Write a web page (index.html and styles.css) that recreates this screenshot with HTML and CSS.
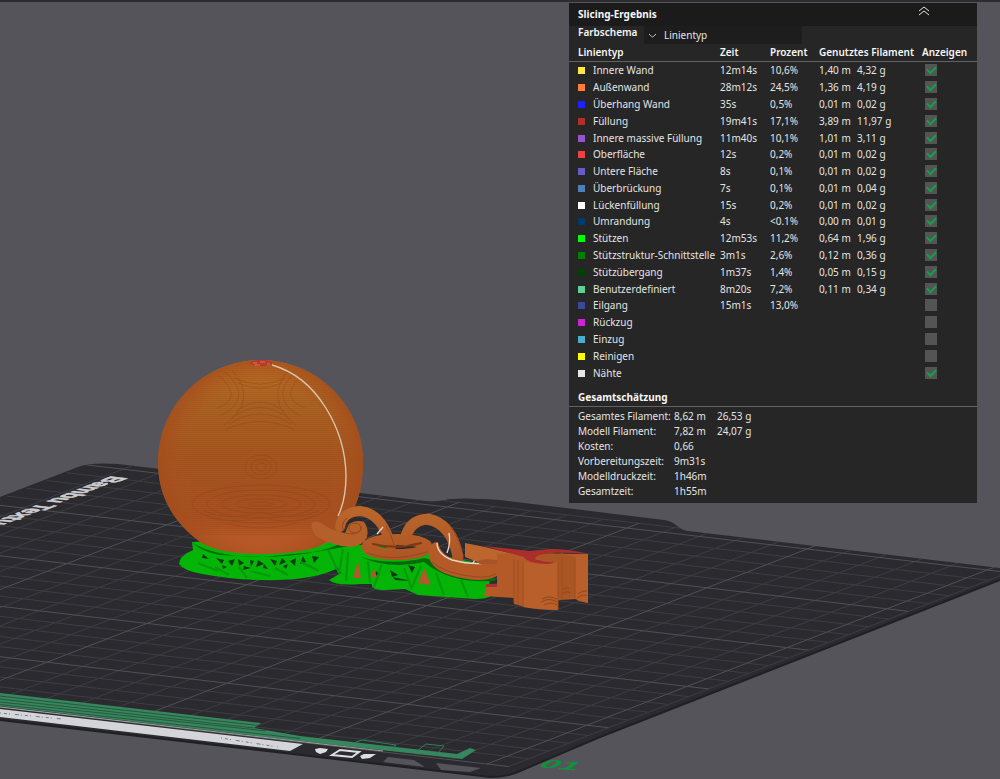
FILE: index.html
```html
<!DOCTYPE html>
<html lang="de">
<head>
<meta charset="utf-8">
<title>Slicing-Ergebnis</title>
<link rel="stylesheet" href="styles.css">
</head>
<body>
<main class="viewport">
<svg class="scene" viewBox="0 0 1000 779" preserveAspectRatio="xMinYMin slice" aria-label="3D-Vorschau">
  <defs>
    <linearGradient id="ball" x1="0" y1="0" x2="0" y2="1">
      <stop offset="0" stop-color="#bd7426"/><stop offset=".2" stop-color="#ac6423"/>
      <stop offset=".5" stop-color="#a55620"/><stop offset=".8" stop-color="#a85022"/><stop offset=".9" stop-color="#b65727"/><stop offset="1" stop-color="#bb5b2a"/>
    </linearGradient>
    <radialGradient id="rim" cx=".5" cy=".5" r=".5">
      <stop offset=".75" stop-color="#a9511d" stop-opacity="0"/><stop offset="1" stop-color="#a44c1b" stop-opacity=".8"/>
    </radialGradient>
    <linearGradient id="ring" x1="0" y1="505" x2="0" y2="560" gradientUnits="userSpaceOnUse">
      <stop offset="0" stop-color="#bb682b"/><stop offset="1" stop-color="#ad5425"/>
    </linearGradient>
    <clipPath id="plateClip"><path d="M0 497L78 467Q90 462 118 464L360 493L425 501Q438 502 445 500Q455 497 500 500L664 520Q671 521 676 525Q681 530 688 531L1000 568V580L600 737L520 771Q508 777 490 777L0 720Z"/></clipPath>
    <clipPath id="ballClip"><path d="M158 462A102.500 102 0 0 1 363 462C363 500 350 526 325 544Q305 553 262 554Q222 554 203 544C172 522 158 495 158 462Z"/></clipPath>
    <pattern id="layers" width="4" height="2" patternUnits="userSpaceOnUse"><path d="M0 .5H4" stroke="#873f12" stroke-width=".6" opacity=".3"/></pattern>
  </defs>
  <path class="plate" d="M0 497L78 467Q90 462 118 464L360 493L425 501Q438 502 445 500Q455 497 500 500L664 520Q671 521 676 525Q681 530 688 531L1000 568V580L600 737L520 771Q508 777 490 777L0 720Z"/>
  <path class="plate-edge" d="M1000 580L600 737L520 771Q508 777 490 777L0 720"/>
  <g clip-path="url(#plateClip)">
    <g transform="matrix(3.6 .42 2 -.776 -413 659)">
      <path class="grid" d="M0 10H256M0 20H256M0 30H256M0 40H256M0 60H256M0 70H256M0 80H256M0 90H256M0 110H256M0 120H256M0 130H256M0 140H256M0 160H256M0 170H256M0 180H256M0 190H256M0 210H256M0 220H256M0 230H256M0 240H256M10 0V256M20 0V256M30 0V256M40 0V256M60 0V256M70 0V256M80 0V256M90 0V256M110 0V256M120 0V256M130 0V256M140 0V256M160 0V256M170 0V256M180 0V256M190 0V256M210 0V256M220 0V256M230 0V256M240 0V256M256 0V256H0"/>
      <path class="grid grid-major" d="M0 0H256M0 50H256M0 100H256M0 150H256M0 200H256M0 250H256M50 0V256M100 0V256M150 0V256M200 0V256M250 0V256"/>
    </g>
    <text class="plate-text" transform="matrix(-.98 .38 -1.200 -.14 112 476)">Bambu Textu</text>
  </g>

  <g class="plate-print">
    <path fill="#36875d" d="M0 693L261 723L254 728L300 736L457 754L470 748L476 750L462 759L300 741L0 706Z"/>
    <path fill="none" stroke="#25402f" stroke-width=".7" d="M0 696L258 725.500M0 699L254 728M0 702L266 731M0 704.500L300 738.500"/>
    <path fill="none" stroke="#2f8058" d="M356 742L362 740L396 745L392 750M416 752L426 744L444 746L436 755"/>
    <path fill="none" stroke="#b8b9bd" stroke-width=".8" d="M0 707L300 741.500L383 751"/>
    <path fill="#d3d5d9" d="M0 709L303 744L290 751L0 717Z"/>
    <path fill="none" stroke="#777a80" stroke-width="1" stroke-dasharray="1 3 3 2 1 5 4 2" d="M0 713L62 719M221 738L278 747"/>
    <path fill="#dddee1" d="M315 749L320 748L328 749L326 752L320 754L316 752ZM360 756L364 754L376 754L370 758L362 759Z"/>
    <path fill="none" stroke="#dddee1" stroke-width="2" d="M332 755L340 750L359 752L352 757Z"/>
    <path fill="#55545b" d="M388 757L414 760L425 767L383 762ZM436 763L481 768L470 772L441 770Z"/>
  </g>
  <text class="plate-number" transform="matrix(3.400 .3 -1.500 1.100 537 767)">01</text>

  <g class="support">
    <path d="M192 542L193 550Q179 556 179 564Q184 571 202 574Q240 581 278 580Q315 579 336 569L350 558L355 535Z"/>
    <path d="M324 544L341 573L329 580Q336 586 360 584L372 584Q370 590 386 590L405 589L418 595L475 599Q487 599 491 596L487 565L430 553L365 545Z"/>
    <path class="support-dark" d="M193 543Q200 551 220 555L262 557L315 552L350 546L345 541Q320 556 262 557Q215 557 193 543ZM361 557Q390 566 425 558L431 560Q447 576 495 578V581Q450 584 424 562Q390 570 361 557Z"/>
    <path class="support-hole" d="M216 558l8 2-2 4zM228 561l7-2-3 7zM238 559l6 4-5 3zM250 560l4 1-3 6zM258 560l6 4-8 3zM270 559l7 2-2 5zM282 558l4 4-7 3zM290 561l6-3-1 8zM303 556l3 6-6 2zM312 556l7 1-5 6zM203 554l6 5-7-1zM222 565l5 2-4 2zM244 566l7 2-8 2zM264 564l4 5-5-1zM283 566l5-2-2 5zM390 570l8 5-6 2zM408 565l7 2-3 6zM393 577l18 4-16-1zM376 571l4 4-5 1z"/>
    <path class="support-line" d="M198 563l20 8M215 567l14 8M239 567l8 11M250 571l20 5M275 568l13 7M301 562l18 9M328 550l11 23 4-24M348 552l-2 29M368 561l2 22M382 563l-8 24M404 568l8 22M421 566l-10 23M436 573l8 22M461 580l7 17"/>
  </g>
  <path fill="#b0592c" d="M358 561L361 578H353ZM374 569L377 577H370ZM424 568L431 585L418 583Z"/>

  <g clip-path="url(#ballClip)">
    <rect x="158" y="360" width="206" height="196" fill="url(#ball)"/>
    <rect x="158" y="360" width="206" height="175" fill="url(#layers)"/>
    <circle cx="260.500" cy="462" r="103" fill="url(#rim)"/>
    <g class="moire">
      <path d="M218 375Q245 398 217 408M225 372Q255 398 220 416M232 370Q259 401 224 425M302 375Q278 398 305 408M295 372Q268 398 300 416M288 370Q264 401 296 425"/>
      <path d="M238 383Q260 393 282 383M234 378Q260 390 286 378M236 412Q260 392 284 412M232 418Q260 397 288 418M229 424Q260 404 291 424M225 430Q260 413 295 430"/>
      <ellipse cx="261" cy="467" rx="5" ry="4"/><ellipse cx="261" cy="467" rx="10" ry="8"/><ellipse cx="261" cy="467" rx="16" ry="12"/>
      <ellipse cx="261" cy="504" rx="12" ry="2"/><ellipse cx="261" cy="504" rx="25" ry="5"/><ellipse cx="261" cy="504" rx="40" ry="9"/><ellipse cx="261" cy="504" rx="54" ry="14"/><ellipse cx="261" cy="504" rx="69" ry="19"/>
      <path d="M203 511Q230 522 261 512Q292 522 319 511M210 518Q240 524 261 517Q285 525 312 518M225 523Q261 533 297 523"/>
    </g>
  </g>
  <ellipse cx="261" cy="363" rx="11" ry="3" fill="#b83a2c"/><path d="M253 363h4m3-1h5m2 2h3m-10 1h-5" stroke="#e0705f"/>
  <path d="M272 365C318 378 345 430 346 475Q346 500 338 516" fill="none" stroke="#d9c5ac" stroke-width="1.400"/>

  <g fill="none" stroke="url(#ring)" stroke-linecap="round" stroke-linejoin="round">
    <path stroke-width="10" d="M340 527Q342 512 360 511Q382 513 391 546"/>
    <path stroke="none" fill="#b4602a" d="M312 523Q316 519 324 525Q333 531 345 533L349 524Q356 519 364 522Q369 528 367 537Q363 546 350 547Q329 545 316 536Q310 528 312 523Z"/>
    <ellipse cx="355" cy="528" rx="6" ry="5" stroke="#94481d" stroke-width="1"/>
    <path stroke="#94481d" stroke-width="1" d="M345 533Q356 536 361 530M343 530Q341 522 347 518"/>
    <ellipse stroke-width="11" cx="397" cy="547" rx="30" ry="7.500"/>
    <path stroke="#7d3914" stroke-width="2" d="M373 544Q397 550 421 543"/>
    <path stroke-width="11" d="M405 540Q409 520 428 519Q452 524 458 557"/>
    <path fill="#b45a27" stroke="none" d="M438 542Q432 541 430 548Q426 558 434 566Q444 577 477 580Q490 580 497 576V563L477 564L460 561Q440 556 438 542Z"/>
    <path stroke="#9a471c" stroke-width="1" d="M432 562Q445 574 477 577Q488 578 496 574M367 553Q393 563 427 552M386 526Q392 536 394 545M450 526Q459 538 462 551"/>
  </g>
  <path d="M377 534L383 527M449 533Q451 542 447 553M437 543Q437 554 452 560Q472 565 484 563M473 563l3-5" fill="none" stroke="#ead6c7" stroke-width="1.400"/>

  <g>
    <path fill="#bc652d" d="M465 543L485 547L514 554V560H497L491 563L478 562L465 557Z"/>
    <path fill="#a8542a" d="M476 562Q480 558 497 560V564L480 564Z"/>
    <path fill="#b35a28" d="M497 554L514 553L588 554V603Q575 601 577 599L558 600V610Q530 609 514 604V598L484 596L486 587H497Z"/>
    <path fill="#b95f2b" d="M523 561Q535 565 558 563V610Q538 610 523 607ZM575 555L588 554V603L575 599Z"/>
    <path fill="#a92e2c" d="M485 546L529 551L550 549Q570 549 588 554Q567 552 549 553Q535 555 535 559Q543 562 555 562L550 564Q528 564 524 557L513 554ZM486 584L497 584V587H486Z"/>
    <path fill="#a95524" d="M537 558Q543 552 558 554L575 557V597L558 600V562Q545 562 537 558Z"/>
    <path fill="none" stroke="#a04e1f" stroke-width="1" d="M514 559V603M518 560V605M523 562V607M558 563V609M562 557V599M575 557V599"/>
    <path fill="none" stroke="#934519" d="M542 599q7-4 15 0M541 602q8-5 16 0M544 605q6-4 13 0M578 594q5-4 9-3M577 598q5-4 10-3M562 590q5-4 7-1M562 594q5-4 8-1"/>
  </g>
</svg>

<section class="panel" aria-label="Slicing-Ergebnis">
  <header class="panel-head">
    <h1 class="title">Slicing-Ergebnis</h1>
    <button class="collapse" type="button" aria-label="Einklappen">
      <svg width="12" height="10" viewBox="0 0 12 10"><path d="M1 5L6 1L11 5M1 9L6 5L11 9"/></svg>
    </button>
  </header>
  <div class="scheme">
    <label class="scheme-label" for="scheme">Farbschema</label>
    <div class="select-wrap">
      <svg width="9" height="5" viewBox="0 0 9 5" aria-hidden="true"><path d="M1 1Q4 4 4.500 4Q5 4 8 1"/></svg>
      <select id="scheme" class="select"><option>Linientyp</option></select>
    </div>
  </div>
  <table class="lines">
    <colgroup><col class="c-type"><col class="c-time"><col class="c-pct"><col class="c-m"><col class="c-g"><col></colgroup>
    <thead><tr><th>Linientyp</th><th>Zeit</th><th>Prozent</th><th colspan="2">Genutztes Filament</th><th>Anzeigen</th></tr></thead>
    <tbody>
      <tr><td><i class="sw yellow"></i>Innere Wand</td><td>12m14s</td><td>10,6%</td><td>1,40 m</td><td>4,32 g</td><td><input type="checkbox" aria-label="Innere Wand" checked></td></tr>
      <tr><td><i class="sw orange"></i>Außenwand</td><td>28m12s</td><td>24,5%</td><td>1,36 m</td><td>4,19 g</td><td><input type="checkbox" aria-label="Außenwand" checked></td></tr>
      <tr><td><i class="sw blue"></i>Überhang Wand</td><td>35s</td><td>0,5%</td><td>0,01 m</td><td>0,02 g</td><td><input type="checkbox" aria-label="Überhang Wand" checked></td></tr>
      <tr><td><i class="sw brick"></i>Füllung</td><td>19m41s</td><td>17,1%</td><td>3,89 m</td><td>11,97 g</td><td><input type="checkbox" aria-label="Füllung" checked></td></tr>
      <tr><td><i class="sw purple"></i>Innere massive Füllung</td><td>11m40s</td><td>10,1%</td><td>1,01 m</td><td>3,11 g</td><td><input type="checkbox" aria-label="Innere massive Füllung" checked></td></tr>
      <tr><td><i class="sw red"></i>Oberfläche</td><td>12s</td><td>0,2%</td><td>0,01 m</td><td>0,02 g</td><td><input type="checkbox" aria-label="Oberfläche" checked></td></tr>
      <tr><td><i class="sw violet"></i>Untere Fläche</td><td>8s</td><td>0,1%</td><td>0,01 m</td><td>0,02 g</td><td><input type="checkbox" aria-label="Untere Fläche" checked></td></tr>
      <tr><td><i class="sw steel"></i>Überbrückung</td><td>7s</td><td>0,1%</td><td>0,01 m</td><td>0,04 g</td><td><input type="checkbox" aria-label="Überbrückung" checked></td></tr>
      <tr><td><i class="sw white"></i>Lückenfüllung</td><td>15s</td><td>0,2%</td><td>0,01 m</td><td>0,02 g</td><td><input type="checkbox" aria-label="Lückenfüllung" checked></td></tr>
      <tr><td><i class="sw navy"></i>Umrandung</td><td>4s</td><td>&lt;0.1%</td><td>0,00 m</td><td>0,01 g</td><td><input type="checkbox" aria-label="Umrandung" checked></td></tr>
      <tr><td><i class="sw lime"></i>Stützen</td><td>12m53s</td><td>11,2%</td><td>0,64 m</td><td>1,96 g</td><td><input type="checkbox" aria-label="Stützen" checked></td></tr>
      <tr><td><i class="sw green"></i>Stützstruktur-Schnittstelle</td><td>3m1s</td><td>2,6%</td><td>0,12 m</td><td>0,36 g</td><td><input type="checkbox" aria-label="Stützstruktur-Schnittstelle" checked></td></tr>
      <tr><td><i class="sw forest"></i>Stützübergang</td><td>1m37s</td><td>1,4%</td><td>0,05 m</td><td>0,15 g</td><td><input type="checkbox" aria-label="Stützübergang" checked></td></tr>
      <tr><td><i class="sw mint"></i>Benutzerdefiniert</td><td>8m20s</td><td>7,2%</td><td>0,11 m</td><td>0,34 g</td><td><input type="checkbox" aria-label="Benutzerdefiniert" checked></td></tr>
      <tr><td><i class="sw indigo"></i>Eilgang</td><td>15m1s</td><td>13,0%</td><td></td><td></td><td><input type="checkbox" aria-label="Eilgang"></td></tr>
      <tr><td><i class="sw magenta"></i>Rückzug</td><td></td><td></td><td></td><td></td><td><input type="checkbox" aria-label="Rückzug"></td></tr>
      <tr><td><i class="sw cyan"></i>Einzug</td><td></td><td></td><td></td><td></td><td><input type="checkbox" aria-label="Einzug"></td></tr>
      <tr><td><i class="sw bright"></i>Reinigen</td><td></td><td></td><td></td><td></td><td><input type="checkbox" aria-label="Reinigen"></td></tr>
      <tr><td><i class="sw pale"></i>Nähte</td><td></td><td></td><td></td><td></td><td><input type="checkbox" aria-label="Nähte" checked></td></tr>
    </tbody>
  </table>
  <h2 class="total-title">Gesamtschätzung</h2>
  <dl class="totals">
    <dt>Gesamtes Filament:</dt><dd>8,62 m</dd><dd>26,53 g</dd>
    <dt>Modell Filament:</dt><dd>7,82 m</dd><dd>24,07 g</dd>
    <dt>Kosten:</dt><dd>0,66</dd>
    <dt>Vorbereitungszeit:</dt><dd>9m31s</dd>
    <dt>Modelldruckzeit:</dt><dd>1h46m</dd>
    <dt>Gesamtzeit:</dt><dd>1h55m</dd>
  </dl>
</section>
</main>
</body>
</html>
```
FILE: styles.css
```css
* { box-sizing: border-box; }
body { margin: 0; background: #55545b; color: #e4e4e4; font: 10px/15px "Noto Sans", "Open Sans", sans-serif; }
.viewport { position: relative; min-height: 100vh; overflow: hidden; border-top: 2px solid #2c2b30; }
.scene { position: absolute; left: 0; top: -2px; width: 100%; height: auto; }
.plate { fill: #2b2a2f; }
.plate-edge { fill: none; stroke: #202024; stroke-width: 2; }
.grid { fill: none; stroke: #3e3d43; stroke-width: 1; vector-effect: non-scaling-stroke; }
.grid-major { stroke: #505056; }
.plate-text { fill: #cdcdd1; stroke: #cdcdd1; stroke-width: 1; font: bold 20px "Liberation Sans", sans-serif; }
.plate-number { fill: #0b9438; font: bold 10px "Liberation Sans", sans-serif; }
.support { fill: #04b406; }
.support-dark { fill: #056a0b; }
.support-hole { fill: #0c3d12; }
.support-line { fill: none; stroke: #06970a; stroke-width: 2; }
.moire { fill: none; stroke: #8b4418; stroke-width: 1; opacity: .4; }

.panel { position: absolute; top: 1px; right: 23px; width: 408px; padding-bottom: 4px; background: #262626; }
.panel-head { display: flex; justify-content: space-between; align-items: flex-start; height: 23px; padding: 3px 47px 0 9px; background: #1b1b1b; }
.title, .total-title { margin: 0; color: #f6f6f6; font-size: 10px; line-height: 16px; font-weight: 700; }
.collapse { display: flex; padding: 0; border: 0; background: none; }
.collapse svg { fill: none; stroke: #e2e2e2; stroke-width: 1; }
.scheme { display: flex; height: 18px; padding-left: 9px; }
.scheme-label { width: 66px; color: #f6f6f6; font-weight: 600; line-height: 13px; }
.select-wrap { display: flex; align-items: center; gap: 7px; width: 158px; height: 18px; padding-left: 4px; background: #1d1d1d; }
.select-wrap svg { fill: none; stroke: #c9c9c9; }
.select { flex: 1; padding: 0; border: 0; appearance: none; background: none; color: inherit; font: inherit; }

.lines { width: 100%; height: 337px; border-collapse: separate; border-spacing: 0; table-layout: fixed; }
.c-type { width: 151px; }
.c-time { width: 50px; }
.c-pct { width: 49px; }
.c-m { width: 38px; }
.c-g { width: 65px; }
th, td { padding: 0; text-align: left; white-space: nowrap; line-height: 16px; vertical-align: middle; }
th { height: 18px; border-bottom: 1px solid #626262; color: #f6f6f6; font-weight: 600; line-height: 15px; }
th:first-child, td:first-child { padding-left: 9px; }
td:last-child { padding-left: 3px; }
.sw { display: inline-block; width: 7px; height: 7px; margin-right: 8px; }
.yellow { background: #ffe64d; } .orange { background: #ff7d38; } .blue { background: #1f1fff; }
.brick { background: #b03029; } .purple { background: #9654cc; } .red { background: #f04040; }
.violet { background: #665cc7; } .steel { background: #4d80ba; } .white { background: #fff; }
.navy { background: #003b6e; } .lime { background: #00ff00; } .green { background: #008000; }
.forest { background: #004000; } .mint { background: #5ed194; } .indigo { background: #38489b; }
.magenta { background: #cd22d6; } .cyan { background: #49adcf; } .bright { background: #ffff00; } .pale { background: #e6e6e6; }
input { display: flex; align-items: center; justify-content: center; appearance: none; width: 12px; height: 12px; margin: 0; padding-bottom: 2px; background: #545454; }
input:checked::after { content: ""; width: 7px; height: 4px; border: solid #12a34a; border-width: 0 0 2px 2px; transform: rotate(-45deg); }

.total-title { margin-top: 8px; padding-left: 9px; border-bottom: 1px solid #626262; line-height: 17px; }
.totals { display: grid; grid-template-columns: 96px 43px auto; margin: 0; padding: 2px 9px 0; }
.totals dt { grid-column: 1; }
.totals dd { margin: 0; }
```
